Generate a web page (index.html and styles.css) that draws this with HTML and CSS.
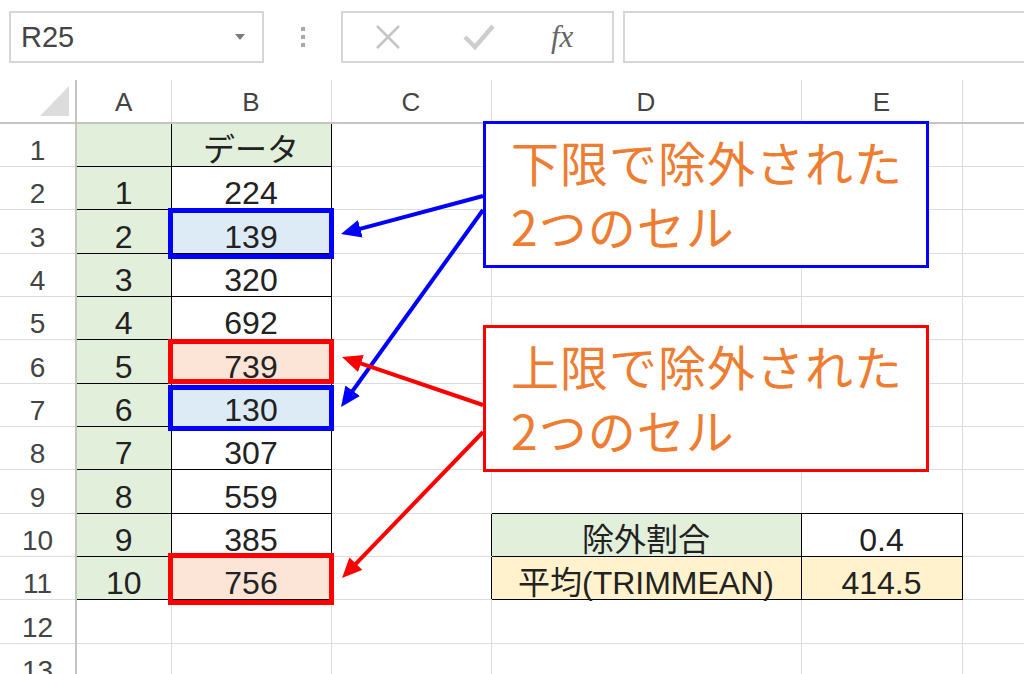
FILE: index.html
```html
<!DOCTYPE html>
<html lang="ja">

<head>
    <meta charset="UTF-8" />
    <meta name="viewport" content="width=device-width, initial-scale=1.0" />
    <title>TRIMMEAN</title>
    <link rel="stylesheet" href="styles.css">
</head>

<body>
    <div class="bar">
        <div class="namebox">
            <span class="ref">R25</span>
            <span class="caret"></span>
        </div>
        <div class="grip"><i></i><i></i><i></i></div>
        <div class="fxbox">
            <svg class="ico-x" width="28" height="28" viewBox="0 0 28 28">
                <path d="M3 3 L25 25 M25 3 L3 25" stroke="#c6c6c6" stroke-width="2.6" fill="none" />
            </svg>
            <svg class="ico-ok" width="32" height="28" viewBox="0 0 32 28">
                <path d="M2 14 L12 24 L30 3" stroke="#cdcdcd" stroke-width="4.5" fill="none" />
            </svg>
            <span class="fx">fx</span>
        </div>
        <div class="input"></div>
    </div>

    <table class="sheet">
        <colgroup>
            <col class="w-rn">
            <col class="w-a">
            <col class="w-b">
            <col class="w-c">
            <col class="w-d">
            <col class="w-e">
            <col class="w-f">
        </colgroup>
        <tr class="cols">
            <th class="corner"><div class="tri"></div></th>
            <th class="col">A</th>
            <th class="col">B</th>
            <th class="col">C</th>
            <th class="col">D</th>
            <th class="col">E</th>
            <th class="col"></th>
        </tr>
        <tr>
            <th class="rn">1</th>
            <td class="box g"></td>
            <td class="box g">データ</td>
            <td></td><td></td><td></td><td></td>
        </tr>
        <tr>
            <th class="rn">2</th>
            <td class="box g">1</td>
            <td class="box">224</td>
            <td></td><td></td><td></td><td></td>
        </tr>
        <tr>
            <th class="rn">3</th>
            <td class="box g">2</td>
            <td class="box lo">139</td>
            <td></td><td></td><td></td><td></td>
        </tr>
        <tr>
            <th class="rn">4</th>
            <td class="box g">3</td>
            <td class="box">320</td>
            <td></td><td></td><td></td><td></td>
        </tr>
        <tr>
            <th class="rn">5</th>
            <td class="box g">4</td>
            <td class="box">692</td>
            <td></td><td></td><td></td><td></td>
        </tr>
        <tr>
            <th class="rn">6</th>
            <td class="box g">5</td>
            <td class="box hi">739</td>
            <td></td><td></td><td></td><td></td>
        </tr>
        <tr>
            <th class="rn">7</th>
            <td class="box g">6</td>
            <td class="box lo">130</td>
            <td></td><td></td><td></td><td></td>
        </tr>
        <tr>
            <th class="rn">8</th>
            <td class="box g">7</td>
            <td class="box">307</td>
            <td></td><td></td><td></td><td></td>
        </tr>
        <tr>
            <th class="rn">9</th>
            <td class="box g">8</td>
            <td class="box">559</td>
            <td></td>
            <td class="edge-b"></td>
            <td class="edge-b"></td>
            <td></td>
        </tr>
        <tr>
            <th class="rn">10</th>
            <td class="box g">9</td>
            <td class="box">385</td>
            <td class="edge-r"></td>
            <td class="box g">除外割合</td>
            <td class="box">0.4</td>
            <td></td>
        </tr>
        <tr>
            <th class="rn">11</th>
            <td class="box g">10</td>
            <td class="box hi">756</td>
            <td class="edge-r"></td>
            <td class="box y">平均(TRIMMEAN)</td>
            <td class="box y">414.5</td>
            <td></td>
        </tr>
        <tr>
            <th class="rn">12</th>
            <td></td><td></td><td></td><td></td><td></td><td></td>
        </tr>
        <tr>
            <th class="rn">13</th>
            <td></td><td></td><td></td><td></td><td></td><td></td>
        </tr>
    </table>

    <!-- shapes drawn over the sheet -->
    <div class="mark blue m-b3"></div>
    <div class="mark red m-b6"></div>
    <div class="mark blue m-b7"></div>
    <div class="mark red m-b11"></div>

    <div class="note low">下限で除外された<br>2つのセル</div>
    <div class="note high">上限で除外された<br>2つのセル</div>

    <svg class="arrows" width="1024" height="674" viewBox="0 0 1024 674">
        <defs>
            <marker id="head-blue" markerUnits="userSpaceOnUse" markerWidth="20" markerHeight="18" refX="12" refY="9" orient="auto">
                <path d="M0 0 L20 9 L0 18 Z" fill="#0000ff" />
            </marker>
            <marker id="head-red" markerUnits="userSpaceOnUse" markerWidth="20" markerHeight="18" refX="12" refY="9" orient="auto">
                <path d="M0 0 L20 9 L0 18 Z" fill="#ff0000" />
            </marker>
        </defs>
        <line x1="483" y1="196" x2="348.7" y2="231.9" stroke="#0000ff" stroke-width="4" marker-end="url(#head-blue)" />
        <line x1="483" y1="210" x2="345.7" y2="400.5" stroke="#0000ff" stroke-width="4" marker-end="url(#head-blue)" />
        <line x1="483" y1="405" x2="349.6" y2="359.6" stroke="#ff0000" stroke-width="4" marker-end="url(#head-red)" />
        <line x1="483" y1="432" x2="347.6" y2="572.3" stroke="#ff0000" stroke-width="4" marker-end="url(#head-red)" />
    </svg>
</body>

</html>
```

FILE: styles.css
```css
body {
    margin: 0;
    width: 1024px;
    height: 674px;
    overflow: hidden;
    position: relative;
    background: #fff;
    font-family: "Liberation Sans", "Noto Sans CJK JP", sans-serif;
    color: #1a1a1a;
}

/* formula bar */
.bar {
    display: flex;
    align-items: flex-start;
    height: 80px;
    box-sizing: border-box;
    padding: 11px 0 0 9px;
}

.bar > div {
    flex: none;
}

.namebox {
    display: flex;
    align-items: center;
    width: 255px;
    height: 52px;
    box-sizing: border-box;
    border: 2px solid #d6d6d6;
    padding: 0 17px 0 10px;
}

.ref {
    font-size: 29px;
    color: #444;
}

.caret {
    margin-left: auto;
    border-left: 5px solid transparent;
    border-right: 5px solid transparent;
    border-top: 6px solid #7a7a7a;
}

.grip {
    width: 77px;
    height: 52px;
    display: flex;
    flex-direction: column;
    align-items: center;
    justify-content: center;
    gap: 4px;
}

.grip i {
    width: 4px;
    height: 4px;
    background: #a8a8a8;
}

.fxbox {
    display: flex;
    align-items: center;
    width: 273px;
    height: 52px;
    box-sizing: border-box;
    border: 2px solid #d6d6d6;
    margin-right: 9px;
}

.ico-x {
    margin-left: 31px;
}

.ico-ok {
    margin-left: 61px;
}

.fx {
    margin-left: 56px;
    font-family: "Liberation Serif", serif;
    font-style: italic;
    font-size: 31px;
    color: #666;
}

/* formula input runs on past the right edge */
.input {
    width: 402px;
    height: 52px;
    box-sizing: border-box;
    border: 2px solid #d6d6d6;
    border-right: none;
}

/* sheet grid */
.sheet {
    border-collapse: collapse;
    table-layout: fixed;
    width: 1024px;
}

.w-rn { width: 76px; }
.w-a { width: 95px; }
.w-b { width: 160px; }
.w-c { width: 160px; }
.w-d { width: 310px; }
.w-e { width: 161px; }
.w-f { width: 62px; }

.sheet tr {
    height: 43.36px;
}

.sheet tr.cols {
    height: 43px;
}

.sheet th,
.sheet td {
    padding: 0;
}

.sheet tr > :last-child {
    border-right: none;
}

.corner {
    border-right: 2px solid #c4c4c4;
    border-bottom: 2px solid #c4c4c4;
    vertical-align: bottom;
    padding: 0 6px 6px 0 !important;
}

.tri {
    width: 29px;
    height: 30px;
    margin-left: auto;
    background: #dcdcdc;
    clip-path: polygon(100% 0, 100% 100%, 0 100%);
}

.col {
    font-weight: normal;
    font-size: 26px;
    color: #444;
    border-left: 1px solid #dcdcdc;
    border-right: 1px solid #dcdcdc;
    border-bottom: 2px solid #c4c4c4;
    vertical-align: middle;
    padding-top: 3px !important;
}

.rn {
    font-weight: normal;
    font-size: 28px;
    line-height: 28px;
    color: #444;
    border-right: 2px solid #c4c4c4;
    border-bottom: 1px solid #dcdcdc;
    vertical-align: bottom;
    padding-bottom: 1px !important;
}

.sheet td {
    border: 1px solid #dcdcdc;
    font-size: 32px;
    line-height: 32px;
    text-align: center;
    vertical-align: bottom;
    color: #222;
}

.sheet td.box {
    border: 1px solid #000;
}

.sheet td.edge-b {
    border-bottom-color: #000;
}

.sheet td.edge-r {
    border-right-color: #000;
}

.g { background: #e2efda; }
.y { background: #fff2cc; }
.lo { background: #ddebf7; }
.hi { background: #fce4d6; }

/* highlight frames */
.mark {
    position: absolute;
    box-sizing: border-box;
    border: 5px solid;
}

.mark.blue { border-color: #0000ff; }
.mark.red { border-color: #ff0000; }

.m-b3 { left: 168px; top: 208px; width: 166px; height: 51px; }
.m-b6 { left: 168px; top: 339px; width: 166px; height: 45px; }
.m-b7 { left: 168px; top: 385px; width: 166px; height: 46px; }
.m-b11 { left: 168px; top: 553px; width: 166px; height: 52px; }

/* callouts */
.note {
    position: absolute;
    left: 483px;
    width: 446px;
    height: 147px;
    box-sizing: border-box;
    border: 3px solid;
    background: #fff;
    padding: 5px 0 0 25px;
    font-family: "Noto Sans CJK JP", sans-serif;
    font-size: 48px;
    line-height: 64px;
    letter-spacing: 1px;
    white-space: nowrap;
    color: #ee7d31;
}

.note.low {
    top: 121px;
    border-color: #0000ff;
}

.note.high {
    top: 325px;
    border-color: #ff0000;
}

.arrows {
    position: absolute;
    left: 0;
    top: 0;
}
```
